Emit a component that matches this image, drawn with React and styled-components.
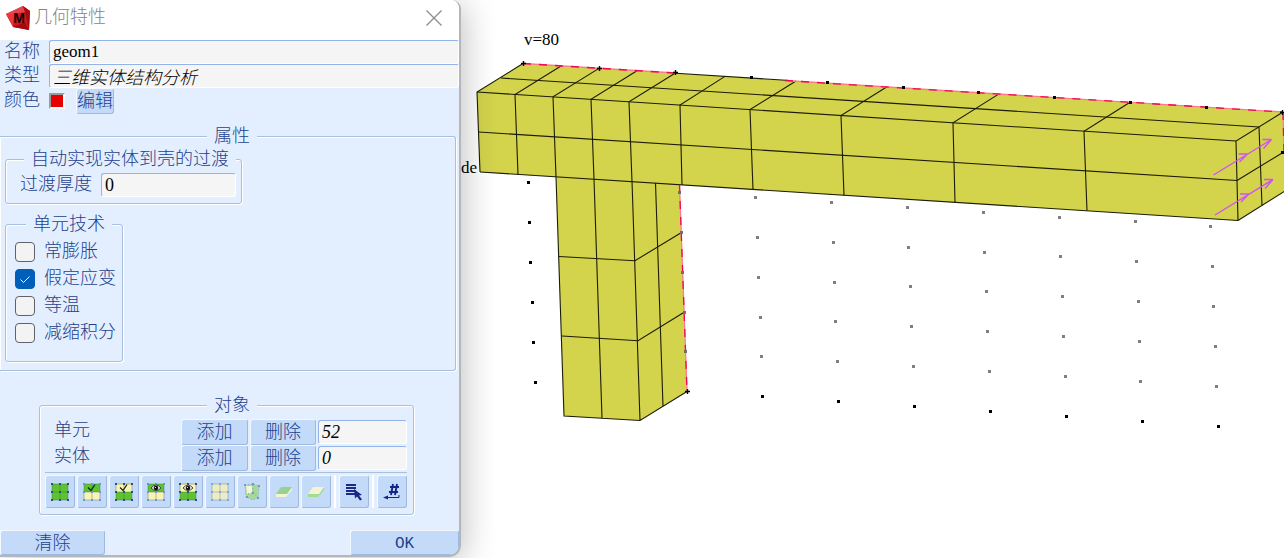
import React from "react";
import styled, { createGlobalStyle, css } from "styled-components";

const GlobalStyle = createGlobalStyle`
  * { box-sizing: border-box; }
  body { margin: 0; background: #fff; }
  body, button, input {
    font-family: "Liberation Mono", "Noto Sans CJK SC", sans-serif;
    font-weight: 300;
  }
`;

const ink = "#1f418c";
const panel = "#e3efff";
const etch = "#a9bfdf";

const Page = styled.div`
  display: flex;
  align-items: flex-start;
  min-height: 100vh;
  overflow: hidden;
`;

const Dialog = styled.form`
  position: relative;
  z-index: 1;
  flex: 0 0 461px;
  border: solid #b4b7ba;
  border-width: 0 2px 2px 0;
  border-radius: 0 9px 12px 0;
  background: ${panel};
  color: ${ink};
  font-size: 18px;
  line-height: 20px;
  box-shadow: 4px 4px 32px rgba(0, 0, 0, 0.24);
  overflow: clip;
`;

const TitleBar = styled.header`
  display: flex;
  align-items: center;
  height: 40px;
  padding: 0 15px 4px 5px;
  gap: 3px;
  background: #fff;
`;

const Title = styled.h1`
  flex: 1;
  margin: 0;
  font-size: 18px;
  line-height: 24px;
  font-weight: 300;
  color: #858585;
`;

const CloseButton = styled.button`
  display: flex;
  padding: 0;
  border: 0;
  background: none;
`;

const FieldRow = styled.div`
  display: flex;
  align-items: center;
  height: 24px;
`;

const FieldLabel = styled.label`
  width: ${(p) => p.$width || 49}px;
  padding-left: ${(p) => p.$indent || 4}px;
`;

const TextInput = styled.input`
  flex: 1;
  min-width: 0;
  height: 24px;
  padding: 0 3px;
  border: 1px solid;
  border-color: #92b4e8 #fff #fff #92b4e8;
  border-radius: 3px;
  background: #f5f5f5;
  color: #000;
  font-family: "Liberation Serif", "Noto Sans CJK SC", serif;
  font-size: ${(p) => (p.$small ? 17 : 18)}px;
  font-style: ${(p) => (p.$italic ? "italic" : "normal")};
  outline: none;
`;

const ColorRow = styled(FieldRow)`
  height: 26px;
`;

const Swatch = styled.span`
  width: 16px;
  height: 16px;
  margin-right: 11px;
  border: 2px solid;
  border-color: #9a9a9a #fff #fff #9a9a9a;
  background: #e60000;
`;

const raised = css`
  border: 1px solid;
  border-color: #f4f9ff #a0b8de #a0b8de #f4f9ff;
  border-radius: 3px;
  background: #c3daf9;
  color: ${ink};
`;

const PushButton = styled.button`
  ${raised}
  width: ${(p) => p.$width}px;
  height: ${(p) => p.$height || 26}px;
  padding: 2px 0 0;
  font-size: ${(p) => (p.$latin ? 16 : 18)}px;
  line-height: 20px;
`;

const Group = styled.fieldset`
  min-width: 0;
  margin: 0;
  padding: 4px 5px 6px;
  border: 1px solid ${etch};
  border-radius: 3px;
  box-shadow: 1px 1px 0 #fff, inset 1px 1px 0 #fff;
`;

const Legend = styled.legend`
  height: 20px;
  margin-left: ${(p) => p.$offset}px;
  padding: 0 7px;
  background: ${panel};
  line-height: 22px;
`;

const AttributeGroup = styled(Group)`
  margin: 12px 3px 0 0;
  padding: 3px 0 8px 5px;
  border-left: 0;
  border-radius: 0 3px 3px 0;
`;

const TransitionGroup = styled(Group)`
  width: 237px;
`;

const TechniqueGroup = styled(Group)`
  width: 118px;
  margin-top: 10px;
  padding: 4px 0 15px 9px;
`;

const CheckRow = styled.label`
  display: flex;
  align-items: center;
  gap: 9px;
  height: 27px;
  white-space: nowrap;
`;

const CheckBox = styled.input`
  appearance: none;
  width: 20px;
  height: 20px;
  margin: 0;
  border: 1px solid #5f6368;
  border-radius: 4px;
  background: #f3f3f3;
  &:checked {
    border-color: #005fb8;
    background: #005fb8 url("data:image/svg+xml,%3Csvg xmlns='http://www.w3.org/2000/svg' viewBox='0 0 18 18'%3E%3Cpath d='M4.5 9.5l3 3 6-6' fill='none' stroke='white'/%3E%3C/svg%3E") center / 18px no-repeat;
  }
`;

const ObjectGroup = styled(Group)`
  width: 375px;
  margin: 24px 0 0 39px;
`;

const ObjectRow = styled.div`
  display: flex;
  align-items: center;
  gap: 2px;
  height: 26px;
  padding-right: 1px;
`;

const ObjectLabel = styled.label`
  width: 134px;
  padding: 0 0 2px 9px;
`;

const ToolBar = styled.div`
  display: flex;
  gap: 2px;
  margin: 1px 1px 0 0;
  padding-top: 2px;
  border-top: 1px solid ${etch};
`;

const ToolButton = styled.button`
  ${raised}
  display: flex;
  align-items: center;
  justify-content: center;
  width: 30px;
  height: 33px;
  padding: 0;
`;

const Separator = styled.span`
  width: 2px;
  margin: 0 1px;
  border: solid;
  border-width: 0 1px;
  border-color: ${etch} #fff;
`;

const Footer = styled.footer`
  display: flex;
  justify-content: space-between;
  margin-top: 15px;
`;

const Viewport = styled.main`
  flex: 1;
  min-width: 0;
`;

const Scene = styled.svg`
  display: block;
  width: 100%;
  height: auto;
  font-family: "Liberation Serif", serif;
  font-size: 17px;
`;

const Logo = () => (
  <svg width="26" height="26" viewBox="0 0 26 26" aria-hidden="true">
    <path d="M1 9L18 1l7 5-1 19-16-3z" fill="#d3161b" />
    <path d="M1 9L18 1l2 6-11 2z" fill="#e2454a" />
    <path d="M18 1l7 5-1 19-4-18z" fill="#a30b10" />
    <path d="M1 9l8 0-1 13z" fill="#e8383c" />
    <path d="M8 22l12-5 4 8z" fill="#a5090e" />
    <text x="14" y="18" textAnchor="middle" fontFamily="Liberation Sans" fontWeight="700" fontSize="14" fill="#160405">M</text>
  </svg>
);

const GREEN = "#5cc42c";
const CREAM = "#fbf3b4";
const NODES = [1, 9, 17];

const MeshIcon = ({ top, bottom, mark, faded }) => (
  <svg width="18" height="18" viewBox="0 0 18 18" opacity={faded ? 0.75 : 1} aria-hidden="true">
    <path d="M1 1h16v8H1z" fill={top} />
    <path d="M1 9h16v8H1z" fill={bottom} />
    <path d="M9 1v16M1 9h16M1 1h16v16H1z" stroke="#426b63" strokeOpacity="0.4" fill="none" />
    {NODES.map((x) =>
      NODES.map((y) => (
        <rect key={`${x}-${y}`} x={x - 1} y={y - 1} width="2" height="2" fill={bottom === GREEN ? "#2b4f80" : "#6a96d4"} />
      ))
    )}
    {mark === "check" && <path d="M5 4.5l3 3 4-6" stroke="#172a12" strokeWidth="1.3" fill="none" />}
    {mark === "eye" && (
      <g>
        <path d="M4 5q5-6 10 0-5 5-10 0z" fill="#eee" stroke="#333" strokeWidth="0.9" />
        <circle cx="9" cy="5" r="2.3" fill="#111" />
        <circle cx="8.5" cy="4.5" r="0.6" fill="#fff" />
      </g>
    )}
  </svg>
);

const SolidIcon = () => (
  <svg width="18" height="18" viewBox="0 0 18 18" aria-hidden="true">
    <path d="M2 2l8-1 6 2-1 12-5 2-7-3z" fill="#a5d99a" />
    <path d="M3 3l6 0v7l-5 1z" fill="#f4f3d4" />
    <path d="M2 2l8-1 6 2-1 12-5 2-7-3zM10 2v8l-6 1M10 10l5 4" fill="none" stroke="#7fa7c4" strokeDasharray="1 2" />
    <path d="M1 1h2v2H1zM9 0h2v2H9zM15 2h2v2h-2zM14 14h2v2h-2zM9 9h2v2H9zM3 13h2v2H3z" fill="#7599c8" />
  </svg>
);

const SheetIcon = ({ upper, lower }) => (
  <svg width="18" height="18" viewBox="0 0 18 18" aria-hidden="true">
    <path d="M1 11h11l5-7v3l-6 7H1z" fill={lower} />
    <path d="M1 11l5-7h11l-5 7z" fill={upper} />
  </svg>
);

const ListPickIcon = () => (
  <svg width="18" height="18" viewBox="0 0 18 18" aria-hidden="true">
    <path d="M1 2h10M1 5h10M1 8h10M1 11h10" stroke="#1c2b88" strokeWidth="2" />
    <path d="M9 6l8 6-3 .5 3 4-2 1-3-4-2 2z" fill="#182780" />
  </svg>
);

const NumberIcon = () => (
  <svg width="18" height="18" viewBox="0 0 18 18" aria-hidden="true">
    <path d="M10 1L8 12M14 1l-2 11M7 4h9M6 9h9" stroke="#14258c" strokeWidth="1.9" />
    <path d="M3 14.5h13V12" stroke="#14258c" fill="none" />
    <path d="M0 14.5l5-2v4z" fill="#14258c" />
  </svg>
);

const TOOLS = [
  { name: "全部单元", icon: <MeshIcon top={GREEN} bottom={GREEN} /> },
  { name: "已选单元", icon: <MeshIcon top={GREEN} bottom={CREAM} mark="check" /> },
  { name: "未选单元", icon: <MeshIcon top={CREAM} bottom={GREEN} mark="check" /> },
  { name: "可见单元", icon: <MeshIcon top={GREEN} bottom={CREAM} mark="eye" /> },
  { name: "不可见单元", icon: <MeshIcon top={CREAM} bottom={GREEN} mark="eye" /> },
  { name: "轮廓", icon: <MeshIcon top={CREAM} bottom={CREAM} faded /> },
  { name: "表面", icon: <SolidIcon /> },
  { name: "顶面", icon: <SheetIcon upper="#98d28f" lower="#f5f3d3" /> },
  { name: "底面", icon: <SheetIcon upper="#f5f3d3" lower="#a0dc92" /> },
];

const TECHNIQUES = [
  ["常膨胀", false],
  ["假定应变", true],
  ["等温", false],
  ["减缩积分", false],
];

const OBJECTS = [
  ["单元", "52"],
  ["实体", "0"],
];

/* Stations along the beam: front-top, front-bottom and back-top x. */
const STATIONS = [
  [477, 480, 523], [515, 518, 561], [553, 556, 599], [591, 594, 637],
  [629, 632, 675], [680, 682, 725], [750, 753, 796], [841, 844, 887],
  [953, 955, 999], [1084, 1087, 1130], [1236, 1238, 1283],
];
const frontTop = (x) => 92 + ((x - 477) * 49) / 759;
const frontBottom = (x) => 172 + ((x - 480) * 48.5) / 758;
const backTop = (x) => 63.5 + ((x - 523) * 48.5) / 760;

/* Grid points; the last one of each column lies on the border. */
const GRID = [
  [[755, 197], [757, 237], [758, 277], [760, 317], [761, 356], [762, 396]],
  [[831, 202], [833, 242], [834, 282], [835, 321], [837, 361], [838, 401]],
  [[907, 207], [908, 247], [910, 286], [911, 326], [913, 366], [914, 406]],
  [[983, 212], [984, 252], [986, 291], [987, 331], [989, 371], [990, 411]],
  [[1059, 217], [1060, 256], [1062, 296], [1063, 336], [1065, 376], [1066, 416]],
  [[1135, 221], [1136, 261], [1138, 301], [1139, 341], [1140, 381], [1142, 421]],
  [[1210, 226], [1212, 266], [1213, 306], [1215, 346], [1216, 386], [1218, 426]],
];
const BORDER_POINTS = [
  [528, 182], [529, 222], [530, 262], [532, 302], [533, 342], [535, 382],
  [751, 77], [827, 82], [903, 87], [978, 92], [1054, 97], [1130, 102], [1206, 107], [1282, 152],
];
const COLUMN_POINTS = [[679, 192], [681, 232], [682, 272], [684, 312], [685, 351]];
const CORNERS = [[523, 63], [599, 68], [675, 72], [1282, 112], [687, 391]];

const Dot = ({ at: [x, y], fill = "#000" }) => (
  <rect x={x - 1} y={y - 1} width="3" height="3" fill={fill} shapeRendering="crispEdges" />
);

const PINK_EDGES = "M523 63.5L675 73M785 80.5L1283 112M1283 112L1284 152M679.5 185L687 391.5";
const ARROW = "M0 0L58-35.5M34-21h-9M34-21l-8 8M58-35.5h-9M58-35.5l-8 9";

const Model = () => (
  <Scene viewBox="461 0 823 558" role="img" aria-label="有限元网格">
    <text x="524" y="45">v=80</text>
    <text x="461" y="173">de</text>
    <g fill="#d3d34c">
      <path d="M556 177L564 416 640 420.5 687 391.5 679.5 180z" />
      <path d="M477 92L523 63.5 1283 112 1285 191 1238 220.5 480 172z" />
    </g>
    <g fill="none" stroke="#1c1c08" strokeWidth="1.1">
      <path d="M556 177L564 416 640 420.5 687 391.5M594 179L602 418M632 181L640 420.5M655.5 183L663 406" />
      <path d="M559 256.5L635 260.7 681.5 232.5M562 336L638 340.7 684.5 312" />
      <path d="M477 92L1236 141M480 172L1238 220.5M478.5 132L1237 180.5M501 78L1259 127" />
      <path d="M1237 180.5L1283 152.5M1238 220.5L1285 191M1259 127L1262 206M672 73L790 80.5" />
      {STATIONS.map(([ft, fb, bt]) => (
        <path key={ft} d={`M${fb} ${frontBottom(fb)}L${ft} ${frontTop(ft)} ${bt} ${backTop(bt)}`} />
      ))}
    </g>
    <g fill="none" strokeWidth="1.3">
      <path d={PINK_EDGES} stroke="#f77f86" />
      <path d={PINK_EDGES} stroke="#f5055a" strokeDasharray="8 8" />
    </g>
    {GRID.map((column) =>
      column.map((at, i) => <Dot key={at.join()} at={at} fill={i < 5 ? "#7f7f7f" : "#000"} />)
    )}
    {COLUMN_POINTS.map((at) => <Dot key={at.join()} at={at} fill="#6f6f6f" />)}
    {BORDER_POINTS.map((at) => <Dot key={at.join()} at={at} />)}
    {CORNERS.map(([x, y]) => (
      <path key={x} d={`M${x - 2} ${y + 0.5}h5M${x + 0.5} ${y - 2}v5`} stroke="#000" strokeWidth="1.4" />
    ))}
    <g fill="none" stroke="#cf55ee" strokeWidth="1.4">
      <path d={ARROW} transform="translate(1213.5 175)" />
      <path d={ARROW} transform="translate(1215 215)" />
    </g>
  </Scene>
);

export default function App() {
  return (
    <Page>
      <GlobalStyle />
      <Dialog onSubmit={(e) => e.preventDefault()}>
        <TitleBar>
          <Logo />
          <Title>几何特性</Title>
          <CloseButton type="button" aria-label="关闭">
            <svg width="20" height="20" viewBox="0 0 20 20">
              <path d="M2.5 2.5l15 15M17.5 2.5l-15 15" stroke="#8c8c8c" strokeWidth="1.3" />
            </svg>
          </CloseButton>
        </TitleBar>
        <FieldRow>
          <FieldLabel htmlFor="name">名称</FieldLabel>
          <TextInput id="name" $small defaultValue="geom1" />
        </FieldRow>
        <FieldRow>
          <FieldLabel htmlFor="type">类型</FieldLabel>
          <TextInput id="type" $italic readOnly value="三维实体结构分析" />
        </FieldRow>
        <ColorRow>
          <FieldLabel as="span">颜色</FieldLabel>
          <Swatch />
          <PushButton type="button" $width={38}>编辑</PushButton>
        </ColorRow>

        <AttributeGroup>
          <Legend $offset={202}>属性</Legend>
          <TransitionGroup>
            <Legend $offset={13}>自动实现实体到壳的过渡</Legend>
            <FieldRow>
              <FieldLabel htmlFor="thickness" $width={90} $indent={9}>过渡厚度</FieldLabel>
              <TextInput id="thickness" defaultValue="0" />
            </FieldRow>
          </TransitionGroup>
          <TechniqueGroup>
            <Legend $offset={11}>单元技术</Legend>
            {TECHNIQUES.map(([label, on]) => (
              <CheckRow key={label}>
                <CheckBox type="checkbox" defaultChecked={on} />
                {label}
              </CheckRow>
            ))}
          </TechniqueGroup>
        </AttributeGroup>

        <ObjectGroup>
          <Legend $offset={162}>对象</Legend>
          {OBJECTS.map(([label, count]) => (
            <ObjectRow key={label}>
              <ObjectLabel htmlFor={label}>{label}</ObjectLabel>
              <PushButton type="button" $width={67}>添加</PushButton>
              <PushButton type="button" $width={66}>删除</PushButton>
              <TextInput id={label} $italic readOnly value={count} />
            </ObjectRow>
          ))}
          <ToolBar>
            {TOOLS.map(({ name, icon }) => (
              <ToolButton key={name} type="button" aria-label={name}>{icon}</ToolButton>
            ))}
            <Separator />
            <ToolButton type="button" aria-label="列表选择"><ListPickIcon /></ToolButton>
            <Separator />
            <ToolButton type="button" aria-label="编号"><NumberIcon /></ToolButton>
          </ToolBar>
        </ObjectGroup>

        <Footer>
          <PushButton type="button" $width={105} $height={25}>清除</PushButton>
          <PushButton type="submit" $width={109} $height={25} $latin>OK</PushButton>
        </Footer>
      </Dialog>
      <Viewport>
        <Model />
      </Viewport>
    </Page>
  );
}
